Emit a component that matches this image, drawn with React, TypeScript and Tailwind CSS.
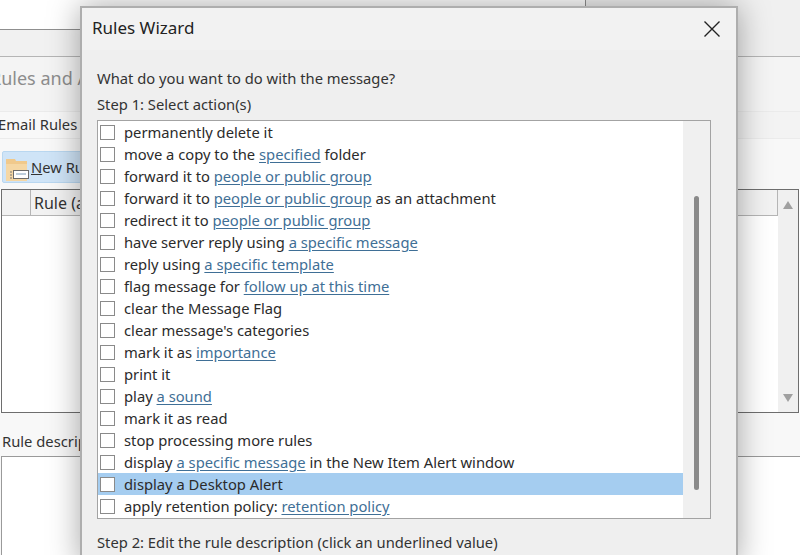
const FONT = "font-['Noto_Sans','Open_Sans',sans-serif]";

type Part = string | { link: string };

const ACTIONS: Part[][] = [
  ['permanently delete it'],
  ['move a copy to the ', { link: 'specified' }, ' folder'],
  ['forward it to ', { link: 'people or public group' }],
  ['forward it to ', { link: 'people or public group' }, ' as an attachment'],
  ['redirect it to ', { link: 'people or public group' }],
  ['have server reply using ', { link: 'a specific message' }],
  ['reply using ', { link: 'a specific template' }],
  ['flag message for ', { link: 'follow up at this time' }],
  ['clear the Message Flag'],
  ["clear message's categories"],
  ['mark it as ', { link: 'importance' }],
  ['print it'],
  ['play ', { link: 'a sound' }],
  ['mark it as read'],
  ['stop processing more rules'],
  ['display ', { link: 'a specific message' }, ' in the New Item Alert window'],
  ['display a Desktop Alert'],
  ['apply retention policy: ', { link: 'retention policy' }],
];

function ActionRow({ parts, selected }: { parts: Part[]; selected: boolean }) {
  return (
    <div className={`h-[22px] flex items-center pl-[2px] ${selected ? 'bg-[#a5cdf0]' : ''}`}>
      <span className={`w-[15px] h-[15px] border border-[#8a8a8a] shrink-0 ${selected ? 'bg-white' : ''}`} />
      <span className="ml-[9px] whitespace-pre text-[#2b2b2b]">
        {parts.map((p, i) =>
          typeof p === 'string' ? (
            <span key={i}>{p}</span>
          ) : (
            <span key={i} className="text-[#3f6f96] underline underline-offset-2">{p.link}</span>
          ),
        )}
      </span>
    </div>
  );
}

function NewRuleIcon() {
  return (
    <svg width="24" height="25" viewBox="0 0 24 25" className="shrink-0 mt-[4px]">
      <path d="M1 2h9l1 2h11v20H1z" fill="#f0c98c" />
      <path d="M1 7h21v17H1z" fill="#f5d7a4" />
      <rect x="8.5" y="13.5" width="15" height="8" fill="#fff" stroke="#6b6b6b" />
      <path d="M11 17h10" stroke="#7d9cb8" />
      <path d="M5 15h2M5 18h2M5 21h2" stroke="#777" />
    </svg>
  );
}

export default function App() {
  return (
    <div className={`${FONT} relative w-[800px] h-[555px] overflow-hidden bg-white text-[14.75px] leading-[20px] text-[#333]`}>
      {/* window behind the dialog, dimmed */}
      <div className="flex flex-col h-full">
        <div className="h-[57px] flex border-b border-[#b5b5b5]">
          <div className="w-[585px] flex flex-col">
            <div className="h-[30px] border-b border-[#8f8f8f] bg-white" />
            <div className="flex-1 bg-[#f1f1f1]" />
          </div>
          <div className="flex-1 border-l border-[#8f8f8f] bg-[#f0f0f0]" />
        </div>
        <div className="h-[54px] bg-[#f4f4f4] pt-[9px] text-[18px] text-[#8d8d8d] leading-[24px] overflow-hidden">
          <div className="w-[80px] overflow-hidden whitespace-nowrap">
            <span className="ml-[-10px]">Rules and Alerts</span>
          </div>
        </div>
        <div className="h-[28px] flex border-y border-[#ebebeb] bg-[#f3f3f3]">
          <div className="w-[80px] pt-[2px] bg-[#f8f8f8] whitespace-nowrap overflow-hidden">
            <div className="ml-[-2px]">Email Rules</div>
          </div>
        </div>
        <div className="bg-[#f8f8f8] pl-[2px] h-[50px] pt-[12px]">
          <div className="w-[130px] h-[32px] flex items-center gap-[2px] pl-[2px] bg-[#cfe4f7] border border-[#b9d7f0] rounded-[2px]">
            <NewRuleIcon />
            <span className="w-[48px] overflow-hidden whitespace-nowrap"><u>N</u>ew Rule</span>
          </div>
        </div>
        <div className="mx-[1px] h-[224px] border border-[#6e6e6e] bg-white flex">
          <div className="flex-1 flex flex-col">
            <div className="h-[26px] flex border-b border-[#b5b5b5] bg-[#f2f2f2] border-r">
              <div className="w-[29px] border-r border-[#b5b5b5]" />
              <div className="pl-[3px] pt-[3px] text-[16px] w-[50px] overflow-hidden whitespace-nowrap">Rule (applied</div>
            </div>
          </div>
          <div className="w-[20px] bg-[#f0f0f0] flex flex-col justify-between items-center pt-[10px] pb-[9px] text-[#a0a0a0]">
            <svg width="12" height="10" viewBox="0 0 12 10"><path d="M6 1l5 8H1z" fill="currentColor" /></svg>
            <svg width="12" height="10" viewBox="0 0 12 10"><path d="M1 1h10L6 9z" fill="currentColor" /></svg>
          </div>
        </div>
        <div className="flex-1 pt-[18px] bg-[#f8f8f8]">
          <div className="pl-[2px] h-[25px] w-[80px] overflow-hidden whitespace-nowrap">Rule description</div>
          <div className="h-full ml-[1px] border-t border-l border-[#9a9a9a] bg-white" />
        </div>
      </div>

      {/* the dialog lies over the window */}
      <div className="absolute left-[80px] top-[6px] w-[658px] h-[560px] bg-[#efefef] border-2 border-[#aeaeae] shadow-[0_0_30px_rgba(0,0,0,0.35)]">
        <div className="h-[42px] bg-[#f2f2f2] flex items-center justify-between pl-[10px] pr-[15px]">
          <span className="text-[17px] text-[#222] mt-[-2px]">Rules Wizard</span>
          <svg width="18" height="18" viewBox="0 0 18 18" className="mt-[-1px]">
            <path d="M1.5 1.5l15 15M16.5 1.5l-15 15" stroke="#222" strokeWidth="1.4" fill="none" />
          </svg>
        </div>
        <div className="px-[15px]">
          <div className="mt-[18px] h-[26px]">What do you want to do with the message?</div>
          <div className="h-[20px]">Step 1: Select action(s)</div>
          <div className="mt-[6px] w-[614px] h-[399px] border border-[#a3a3a3] bg-white flex">
            <div className="w-[585px]">
              {ACTIONS.map((parts, i) => (
                <ActionRow key={i} parts={parts} selected={i === 16} />
              ))}
            </div>
            <div className="flex-1 bg-[#f0f0f0] pt-[75px] flex justify-center">
              <div className="w-[5px] h-[294px] rounded-full bg-[#8a8a8a]" />
            </div>
          </div>
          <div className="mt-[13px]">Step 2: Edit the rule description (click an underlined value)</div>
        </div>
      </div>
    </div>
  );
}
